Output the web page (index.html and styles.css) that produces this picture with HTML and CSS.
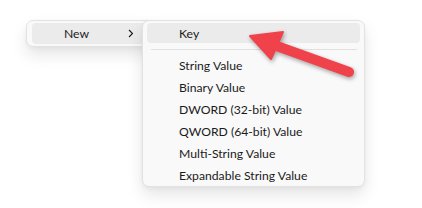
FILE: index.html
```html
<!DOCTYPE html>
<html lang="en">
<head>
  <meta charset="UTF-8">
  <title>Registry context menu</title>
  <link rel="stylesheet" href="styles.css">
</head>
<body>
  <div class="stage">
    <!-- parent menu -->
    <div class="menu menu-parent">
      <div class="item active">
        <span class="label">New</span>
        <svg class="chevron" width="6" height="9" viewBox="0 0 6 9">
          <path d="M1 1 L4.5 4.5 L1 8" fill="none" stroke="#1b1b1b" stroke-width="1.1"/>
        </svg>
      </div>
    </div>

    <!-- submenu -->
    <div class="menu menu-sub">
      <div class="item active"><span class="label">Key</span></div>
      <div class="separator"></div>
      <div class="item"><span class="label">String Value</span></div>
      <div class="item"><span class="label">Binary Value</span></div>
      <div class="item"><span class="label">DWORD (32-bit) Value</span></div>
      <div class="item"><span class="label">QWORD (64-bit) Value</span></div>
      <div class="item"><span class="label">Multi-String Value</span></div>
      <div class="item"><span class="label">Expandable String Value</span></div>
    </div>

    <!-- callout arrow -->
    <svg class="callout" width="422" height="208" viewBox="0 0 422 208">
      <g class="callout-shape">
        <line x1="274" y1="45" x2="349" y2="72" stroke="#f0424a" stroke-width="10" stroke-linecap="round"/>
        <polygon points="250,36 283,32 271,59" fill="#f0424a" stroke="#f0424a" stroke-width="2" stroke-linejoin="round"/>
      </g>
    </svg>
  </div>
</body>
</html>
```

FILE: styles.css
```css
body {
  margin: 0;
  background: #ffffff;
  font-family: Lato, "Noto Sans", sans-serif;
  font-size: 12.2px;
  color: #1b1b1b;
}

.stage {
  position: relative;
  width: 422px;
  height: 208px;
  padding: 20px 0 0 26px;
  box-sizing: border-box;
  display: flex;
  align-items: flex-start;
}

.menu {
  display: flex;
  flex-direction: column;
  background: #f9f9f9;
  border: 1px solid #e2e2e2;
  border-radius: 7px;
  box-shadow: 0 8px 16px rgba(0, 0, 0, 0.10), 0 2px 4px rgba(0, 0, 0, 0.04);
}

.menu-parent {
  width: 128px;
  padding: 2px 5px;
  box-sizing: border-box;
}

.menu-sub {
  position: relative;
  z-index: 1;
  width: 223px;
  margin-left: -12px;
  padding: 1px 4px 0;
  box-sizing: border-box;
}

.item {
  display: flex;
  align-items: center;
  height: 20px;
  margin: 1px 0;
  padding-left: 32px;
  border-radius: 4px;
}

.menu-parent .item {
  height: 21px;
  margin: 0;
}

.item.active {
  background: #ebebeb;
}

.label {
  white-space: nowrap;
}

.chevron {
  margin-left: 39px;
}

.separator {
  height: 1px;
  margin: 5px 3px 4px 4px;
  background: #e0e0e0;
}

.callout {
  position: absolute;
  left: 0;
  top: 0;
  z-index: 2;
  pointer-events: none;
}

.callout-shape {
  filter: drop-shadow(1px 2px 2px rgba(0, 0, 0, 0.35));
}
```
